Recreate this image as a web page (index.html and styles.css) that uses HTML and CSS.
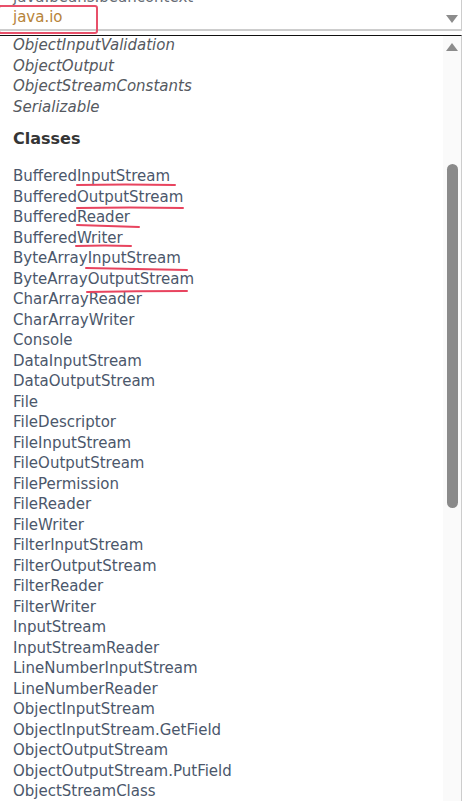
FILE: index.html
```html
<!DOCTYPE html>
<html>
<head>
<meta charset="utf-8">
<link rel="stylesheet" href="styles.css">
</head>
<body>
<div class="page">
  <div class="top">
    <div class="top-list">
      <div class="row muted">java.beans.beancontext</div>
      <div class="row pkg">java.io</div>
    </div>
    <div class="top-bar">
      <svg class="arrow" width="12" height="8" viewBox="0 0 12 8"><path d="M0 0H12L6 8Z" fill="#8c8c8c"/></svg>
    </div>
  </div>
  <div class="gap"></div>
  <div class="main">
    <div class="content">
      <div class="row it">ObjectInputValidation</div>
      <div class="row it">ObjectOutput</div>
      <div class="row it">ObjectStreamConstants</div>
      <div class="row it">Serializable</div>
      <h2 class="heading">Classes</h2>
      <div class="classes">
        <div class="row">BufferedInputStream</div>
        <div class="row">BufferedOutputStream</div>
        <div class="row">BufferedReader</div>
        <div class="row">BufferedWriter</div>
        <div class="row">ByteArrayInputStream</div>
        <div class="row">ByteArrayOutputStream</div>
        <div class="row">CharArrayReader</div>
        <div class="row">CharArrayWriter</div>
        <div class="row">Console</div>
        <div class="row">DataInputStream</div>
        <div class="row">DataOutputStream</div>
        <div class="row">File</div>
        <div class="row">FileDescriptor</div>
        <div class="row">FileInputStream</div>
        <div class="row">FileOutputStream</div>
        <div class="row">FilePermission</div>
        <div class="row">FileReader</div>
        <div class="row">FileWriter</div>
        <div class="row">FilterInputStream</div>
        <div class="row">FilterOutputStream</div>
        <div class="row">FilterReader</div>
        <div class="row">FilterWriter</div>
        <div class="row">InputStream</div>
        <div class="row">InputStreamReader</div>
        <div class="row">LineNumberInputStream</div>
        <div class="row">LineNumberReader</div>
        <div class="row">ObjectInputStream</div>
        <div class="row">ObjectInputStream.GetField</div>
        <div class="row">ObjectOutputStream</div>
        <div class="row">ObjectOutputStream.PutField</div>
        <div class="row">ObjectStreamClass</div>
      </div>
    </div>
    <div class="scrollbar">
      <svg class="arrow up" width="12" height="8" viewBox="0 0 12 8"><path d="M0 8H12L6 0Z" fill="#8c8c8c"/></svg>
      <div class="thumb"></div>
    </div>
  </div>
  <div class="pkg-box"></div>
  <svg class="marks" width="465" height="801" viewBox="0 0 465 801">
    <g stroke="#e8445f" stroke-width="2" fill="none" stroke-linecap="round">
      <path d="M77 185 Q125 184 175 185"/>
      <path d="M77 208 Q130 207 183 208"/>
      <path d="M77 225 Q110 226 139 227"/>
      <path d="M76 246 Q105 245 131 246"/>
      <path d="M86 268 Q135 269 187 270"/>
      <path d="M87 292 Q137 291 187 291"/>
    </g>
  </svg>
</div>
</body>
</html>
```
FILE: styles.css
```css
html, body {
  margin: 0;
  padding: 0;
  background: #ffffff;
}
body {
  font-family: "DejaVu Sans", Verdana, sans-serif;
  font-size: 15px;
  color: #4b576b;
}
.page {
  position: relative;
  width: 465px;
  height: 801px;
  overflow: hidden;
}
.top {
  display: flex;
  width: 461px;
  height: 29px;
  border-right: 1px solid #cdcdcd;
  border-bottom: 2px solid #cdcdcd;
  overflow: hidden;
}
.top-list {
  flex: 1;
  padding-left: 13px;
  margin-top: -13.25px;
}
.row {
  line-height: 20.5px;
  height: 20.5px;
  white-space: nowrap;
}
.muted {
  color: #666c75;
}
.pkg {
  color: #b7843a;
}
.top-bar {
  width: 18px;
  display: flex;
  justify-content: center;
  padding-top: 15px;
}
.arrow {
  display: block;
}
.pkg-box {
  position: absolute;
  left: -2px;
  top: 5px;
  width: 96px;
  height: 25px;
  border: 2px solid #e8506a;
  border-radius: 3px;
}
.gap {
  height: 4px;
}
.main {
  display: flex;
  width: 461px;
  height: 766px;
  border-top: 1px solid #111111;
  border-right: 1px solid #cdcdcd;
  overflow: hidden;
}
.content {
  flex: 1;
  padding-left: 13px;
  margin-top: -1px;
}
.it {
  font-style: italic;
  color: #55595f;
}
.heading {
  margin: 12px 0 0 0;
  font-size: 16px;
  line-height: 20px;
  font-weight: bold;
  color: #353535;
}
.classes {
  margin-top: 17px;
}
.scrollbar {
  width: 18px;
  background: #fafafa;
  display: flex;
  flex-direction: column;
  align-items: center;
  padding-top: 7px;
}
.thumb {
  margin-top: 113px;
  width: 11px;
  height: 344px;
  border-radius: 6px;
  background: #8a8a8a;
}
.marks {
  position: absolute;
  left: 0;
  top: 0;
  pointer-events: none;
}
```
